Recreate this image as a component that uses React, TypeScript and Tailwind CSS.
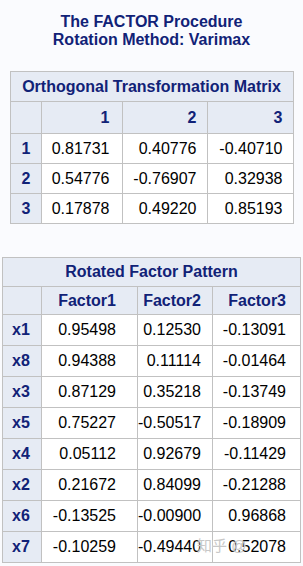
import React from "react";

const font = { fontFamily: '"Liberation Sans", Arial, "Noto Sans CJK SC", sans-serif' };

const transform = [
  ["1", "0.81731", "0.40776", "-0.40710"],
  ["2", "0.54776", "-0.76907", "0.32938"],
  ["3", "0.17878", "0.49220", "0.85193"],
];

const pattern = [
  ["x1", "0.95498", "0.12530", "-0.13091"],
  ["x8", "0.94388", "0.11114", "-0.01464"],
  ["x3", "0.87129", "0.35218", "-0.13749"],
  ["x5", "0.75227", "-0.50517", "-0.18909"],
  ["x4", "0.05112", "0.92679", "-0.11429"],
  ["x2", "0.21672", "0.84099", "-0.21288"],
  ["x6", "-0.13525", "-0.00900", "0.96868"],
  ["x7", "-0.10259", "-0.49440", "0.52078"],
];

const hd = "border border-[#c1c1c1] bg-[#e6ebf4] text-[#112277] text-[16px] font-bold";
const cell = "border border-[#c1c1c1] bg-white text-black text-[16px] text-right";

export default function App() {
  return (
    <div className="min-h-[566px] w-[303px] bg-[#fafbfe] text-[16px] leading-[18px]" style={font}>
      <div className="pt-[13px] text-center font-bold text-[#112277]">
        <div>The FACTOR Procedure</div>
        <div>Rotation Method: Varimax</div>
      </div>

      <table className="mx-auto mt-[22px] w-[283px] table-fixed border-collapse text-[16px]">
        <colgroup>
          <col className="w-[31px]" />
          <col className="w-[81px]" />
          <col className="w-[85px]" />
          <col className="w-[86px]" />
        </colgroup>
        <thead>
          <tr className="h-[30px]">
            <th colSpan={4} className={hd + " text-center"}>Orthogonal Transformation Matrix</th>
          </tr>
          <tr className="h-[32px]">
            <th className={hd}></th>
            <th className={hd + " pr-[12px] text-right"}>1</th>
            <th className={hd + " pr-[10px] text-right"}>2</th>
            <th className={hd + " pr-[10px] text-right"}>3</th>
          </tr>
        </thead>
        <tbody>
          {transform.map((r) => (
            <tr key={r[0]} className="h-[30px]">
              <th className={hd + " pl-[11px] text-left"}>{r[0]}</th>
              <td className={cell + " pr-[12px]"}>{r[1]}</td>
              <td className={cell + " pr-[10px]"}>{r[2]}</td>
              <td className={cell + " pr-[10px]"}>{r[3]}</td>
            </tr>
          ))}
        </tbody>
      </table>

      <div className="relative">
        <table className="mx-auto mt-[33px] w-[298px] table-fixed border-collapse text-[16px]">
          <colgroup>
            <col className="w-[39px]" />
            <col className="w-[96px]" />
            <col className="w-[75px]" />
            <col className="w-[88px]" />
          </colgroup>
          <thead>
            <tr className="h-[29px]">
              <th colSpan={4} className={hd + " text-center"}>Rotated Factor Pattern</th>
            </tr>
            <tr className="h-[28px]">
              <th className={hd}></th>
              <th className={hd + " pr-[21px] text-right"}>Factor1</th>
              <th className={hd + " pr-[11px] text-right"}>Factor2</th>
              <th className={hd + " pr-[14px] text-right"}>Factor3</th>
            </tr>
          </thead>
          <tbody>
            {pattern.map((r) => (
              <tr key={r[0]} className="h-[31px]">
                <th className={hd + " pl-[9px] text-left"}>{r[0]}</th>
                <td className={cell + " pr-[21px]"}>{r[1]}</td>
                <td className={cell + " pr-[11px]"}>{r[2]}</td>
                <td className={cell + " pr-[14px]"}>{r[3]}</td>
              </tr>
            ))}
          </tbody>
        </table>
        <div className="absolute bottom-[8px] left-[197px] text-[15px] text-[#c8c8c8] [text-shadow:0_0_2px_#fff]">
          知乎 @
        </div>
      </div>
    </div>
  );
}
